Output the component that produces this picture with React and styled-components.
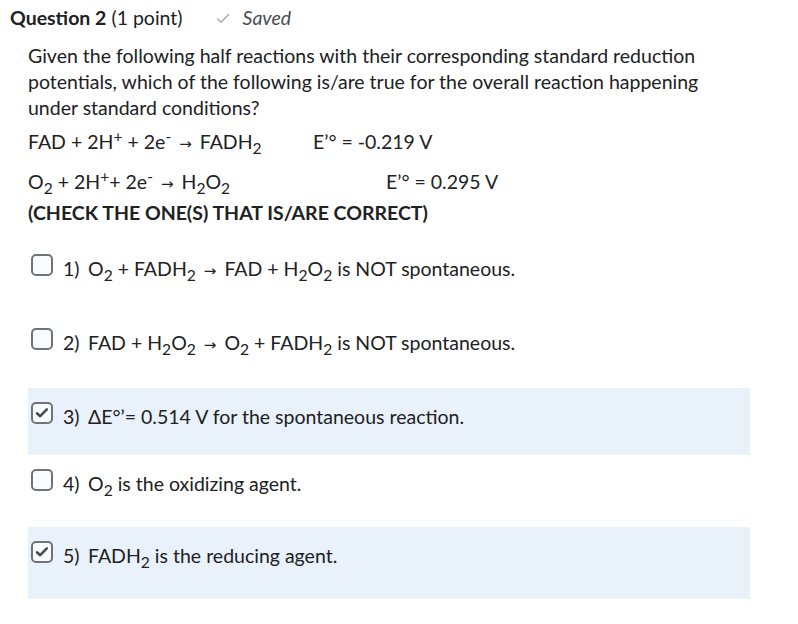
import React from "react";
import styled, { createGlobalStyle } from "styled-components";

const GlobalStyle = createGlobalStyle`
  html, body { margin: 0; padding: 0; background: #ffffff; }
  body {
    font-family: Lato, "Noto Sans", sans-serif;
    color: #202122;
    -webkit-font-smoothing: antialiased;
  }
`;

const Page = styled.div`
  width: 798px;
  padding: 5px 0 20px 0;
`;

const Header = styled.div`
  display: flex;
  align-items: center;
  padding-left: 10px;
  font-size: 19.5px;
  line-height: 26px;
`;

const Title = styled.span`
  font-weight: 700;
`;

const Points = styled.span`
  font-weight: 400;
  margin-left: 5px;
`;

const SavedMark = styled.span`
  display: inline-flex;
  align-items: center;
  margin-left: 33px;
  color: #494c4e;
  font-style: italic;
  font-size: 19.5px;
  gap: 13px;
`;

const Body = styled.div`
  margin: 12px 0 0 28px;
  font-size: 19.5px;
  line-height: 26px;
`;

const Para = styled.p`
  margin: 0;
  width: 690px;
`;

const EqLine = styled.div`
  display: flex;
  align-items: baseline;
  margin-top: ${(p) => p.$mt}px;
`;

const EqLeft = styled.span`
  display: inline-block;
  width: ${(p) => p.$w}px;
  white-space: nowrap;
`;

const Sub = styled.sub`
  font-size: 0.8em;
  vertical-align: -0.3em;
  line-height: 0;
`;

const Sup = styled.sup`
  font-size: 0.8em;
  vertical-align: 0.45em;
  line-height: 0;
`;

const Strong = styled.div`
  font-weight: 700;
  margin-top: 3px;
`;

const Options = styled.div`
  margin-top: 14px;
  width: 722px;
`;

const Option = styled.div`
  display: flex;
  align-items: flex-start;
  padding: 16px 0 ${(p) => (p.$tall ? 30 : 25)}px 3px;
  background: ${(p) => (p.$selected ? "#e9f1fb" : "transparent")};
  font-size: 19.5px;
  line-height: 26px;
`;

const Box = styled.span`
  box-sizing: border-box;
  flex: none;
  width: 22px;
  height: 22px;
  margin-top: -2px;
  border: 2px solid #6e7376;
  border-radius: 5px;
  background: #f9fbff;
  display: flex;
  align-items: center;
  justify-content: center;
`;

const Num = styled.span`
  display: inline-block;
  width: 25px;
  margin-left: 10px;
  flex: none;
`;

const Arrow = styled.span`
  font-family: "DejaVu Sans", sans-serif;
  font-size: 15px;
  margin: 0 3px;
`;

const CheckMark = () => (
  <svg width="14" height="12" viewBox="0 0 14 12">
    <path d="M2 6.3 L5.2 9.2 L11.8 2.4" fill="none" stroke="#494c4e" strokeWidth="2.6" strokeLinecap="round" strokeLinejoin="round" />
  </svg>
);

const SavedCheck = () => (
  <svg width="14" height="11" viewBox="0 0 14 11">
    <path d="M1.5 6 L5 9.2 L12.5 1.5" fill="none" stroke="#a8afb5" strokeWidth="1.6" strokeLinecap="round" strokeLinejoin="round" />
  </svg>
);

const Checkbox = ({ checked }) => <Box>{checked && <CheckMark />}</Box>;

const Ar = () => <Arrow>→</Arrow>;

const options = [
  {
    n: "1)",
    checked: false,
    tall: true,
    text: (
      <>
        O<Sub>2</Sub> + FADH<Sub>2</Sub> <Ar /> FAD + H<Sub>2</Sub>O<Sub>2</Sub> is NOT spontaneous.
      </>
    ),
  },
  {
    n: "2)",
    checked: false,
    tall: true,
    text: (
      <>
        FAD + H<Sub>2</Sub>O<Sub>2</Sub> <Ar /> O<Sub>2</Sub> + FADH<Sub>2</Sub> is NOT spontaneous.
      </>
    ),
  },
  {
    n: "3)",
    checked: true,
    tall: false,
    text: <>ΔE°’= 0.514 V for the spontaneous reaction.</>,
  },
  {
    n: "4)",
    checked: false,
    tall: true,
    text: (
      <>
        O<Sub>2</Sub> is the oxidizing agent.
      </>
    ),
  },
  {
    n: "5)",
    checked: true,
    tall: true,
    text: (
      <>
        FADH<Sub>2</Sub> is the reducing agent.
      </>
    ),
  },
];

export default function App() {
  return (
    <Page>
      <GlobalStyle />
      <Header>
        <Title>Question 2</Title>
        <Points>(1 point)</Points>
        <SavedMark>
          <SavedCheck />
          Saved
        </SavedMark>
      </Header>
      <Body>
        <Para>
          Given the following half reactions with their corresponding standard reduction
          potentials, which of the following is/are true for the overall reaction happening
          under standard conditions?
        </Para>
        <EqLine $mt={8}>
          <EqLeft $w={285}>
            FAD + 2H<Sup>+</Sup> + 2e<Sup>-</Sup> <Ar /> FADH<Sub>2</Sub>
          </EqLeft>
          <span>E’° = -0.219 V</span>
        </EqLine>
        <EqLine $mt={12}>
          <EqLeft $w={358}>
            O<Sub>2</Sub> + 2H<Sup>+</Sup>+ 2e<Sup>-</Sup> <Ar /> H<Sub>2</Sub>O<Sub>2</Sub>
          </EqLeft>
          <span>E’° = 0.295 V</span>
        </EqLine>
        <Strong>(CHECK THE ONE(S) THAT IS/ARE CORRECT)</Strong>
        <Options>
          {options.map((o) => (
            <Option key={o.n} $selected={o.checked} $tall={o.tall}>
              <Checkbox checked={o.checked} />
              <Num>{o.n}</Num>
              <span>{o.text}</span>
            </Option>
          ))}
        </Options>
      </Body>
    </Page>
  );
}
